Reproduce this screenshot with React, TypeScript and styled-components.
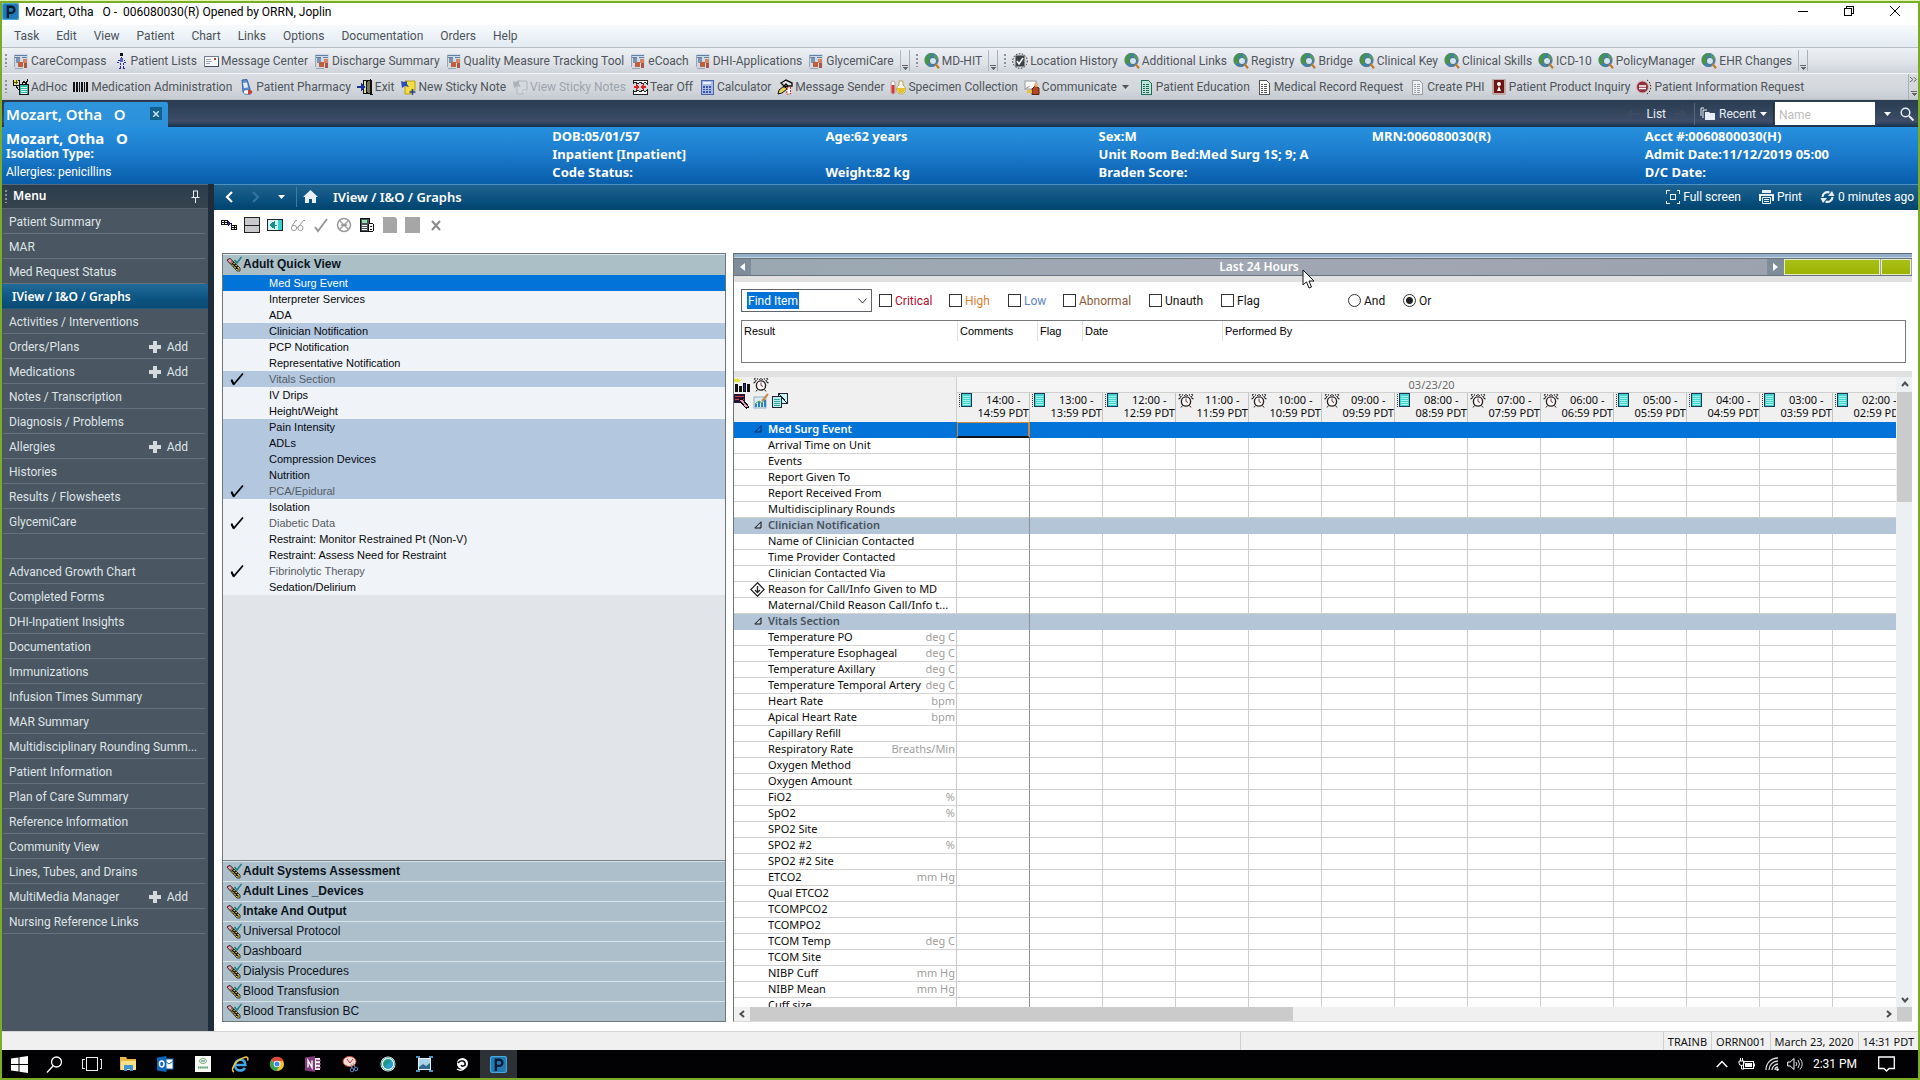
import React from 'react';
import styled, { createGlobalStyle, css } from 'styled-components';

const UI = 'Roboto, "Segoe UI", sans-serif';
const HUMANIST = '"Noto Sans", "Segoe UI", sans-serif';
const CLASSIC = '"Liberation Sans", Arial, sans-serif';

const Global = createGlobalStyle`
  *, *::before, *::after { box-sizing: border-box; }
  body { margin: 0; background: #000; font: 12px/16px ${UI}; color: #111; overflow: hidden; }
  button, input { font: inherit; color: inherit; }
  button { border: 0; padding: 0; background: none; cursor: default; }
  svg { display: block; flex: none; }
  ul { list-style: none; margin: 0; padding: 0; }
  a { color: inherit; text-decoration: none; cursor: default; }
`;

/* ---------- window frame ---------- */

const Screen = styled.div`
  height: 100vh;
  padding-top: 1px;
  background: #e2f7b4;
  display: flex;
`;
const Frame = styled.div`
  flex: 1;
  min-width: 0;
  border: 2px solid #7bac25;
  background: #fff;
  display: flex;
  flex-direction: column;
`;
const TitleBar = styled.header`
  height: 22px;
  flex: none;
  display: flex;
  align-items: flex-start;
  background: #fff;
  color: #000;
  white-space: pre;
`;
const TitleText = styled.h1`
  margin: 0;
  flex: 1;
  padding: 1px 0 0 6px;
  font-size: 12px;
  line-height: 16px;
  font-weight: 400;
`;
const WindowButton = styled.button`
  width: 46px;
  height: 16px;
  display: flex;
  justify-content: center;
  align-items: center;
`;
const MenuBar = styled.nav`
  height: 23px;
  flex: none;
  display: flex;
  align-items: center;
  gap: 17px;
  padding-left: 12px;
  background: linear-gradient(#f7fafc, #e2ebf3);
  border-bottom: 1px solid #b9bec5;
  color: #4c5258;
`;

/* ---------- toolbars ---------- */

const ToolStrip = styled.div<{ $low?: boolean }>`
  height: 26px;
  flex: none;
  display: flex;
  align-items: stretch;
  background: ${(p) => (p.$low ? 'linear-gradient(#dadde2, #d3d7dc 60%, #c6cbd2)' : 'linear-gradient(#edf0f5, #dfe2e7 60%, #ced3da)')};
  border-bottom: 1px solid ${(p) => (p.$low ? '#b9bec5' : '#f3f5f8')};
  color: #4f555c;
`;
const ToolGroup = styled.div`
  display: flex;
  align-items: center;
  padding-left: 3px;
`;
const Grip = styled.i`
  width: 2px;
  height: 13px;
  margin-right: 6px;
  flex: none;
  background: repeating-linear-gradient(#8b929c 0 2px, transparent 2px 4px);
`;
const ToolButton = styled.button<{ $off?: boolean }>`
  height: 22px;
  display: flex;
  align-items: center;
  gap: 2px;
  padding-right: 6px;
  white-space: nowrap;
  color: ${(p) => (p.$off ? '#9ea4ab' : 'inherit')};
`;
const GroupEnd = styled.span`
  align-self: stretch;
  width: 10px;
  margin: 2px 3px 2px 0;
  padding-bottom: 1px;
  border-left: 1px solid #b2b8c0;
  border-right: 1px solid #a9afb8;
  display: flex;
  align-items: flex-end;
  justify-content: center;
`;
const Overflow = styled.button`
  margin-left: auto;
  width: 10px;
  border-left: 1px solid #a9afb8;
  display: flex;
  flex-direction: column;
  align-items: center;
  justify-content: space-between;
  padding: 3px 0;
`;

/* ---------- patient tab and banner ---------- */

const TabBar = styled.div`
  height: 27px;
  flex: none;
  display: flex;
  align-items: center;
  padding-left: 2px;
  background: linear-gradient(#2a3c50, #35475f 50%, #3f4c68 80%, #1f3a56 94%, #16324c);
  color: #e8eef5;
`;
const PatientTab = styled.div`
  align-self: flex-end;
  height: 25px;
  width: 164px;
  padding: 0 6px 2px 2px;
  border-radius: 2px 2px 0 0;
  background: linear-gradient(#2f95dd, #2a90da);
  display: flex;
  align-items: center;
  justify-content: space-between;
  font: 600 15px/20px ${HUMANIST};
  color: #fff;
  white-space: pre;
`;
const TabClose = styled.button`
  width: 12px;
  height: 13px;
  background: #14608f;
  display: grid;
  place-items: center;
`;
const TabTools = styled.div`
  margin-left: auto;
  height: 100%;
  padding-right: 4px;
  display: flex;
  align-items: center;
`;
const ListButtons = styled.div`
  display: flex;
  align-items: center;
  gap: 8px;
  padding-right: 8px;
`;
const RecentButton = styled.button`
  height: 22px;
  display: flex;
  align-items: center;
  gap: 4px;
  width: 80px;
  padding: 0 6px 0 5px;
  border-left: 1px solid #56657c;
  border-right: 1px solid #1c2b3d;
`;
const NameBox = styled.input`
  width: 100px;
  height: 23px;
  margin-left: 1px;
  padding: 2px 4px 0;
  border: 0;
  background: #fff;
  outline: 0;
  &::placeholder { color: #bdbdbd; opacity: 1; }
`;
const IconButton = styled.button<{ $w: number }>`
  width: ${(p) => p.$w}px;
  height: 20px;
  display: grid;
  place-items: center;
`;
const Banner = styled.section`
  height: 57px;
  flex: none;
  padding: 0 0 0 4px;
  display: grid;
  grid-template-columns: 2fr repeat(5, 1fr);
  background: linear-gradient(#2791de, #1b7acb 50%, #0b62b0 90%, #0a5fa9);
  color: #fff;
  font: 700 13px/18px ${HUMANIST};
  white-space: nowrap;
`;
const BannerCol = styled.div`
  display: grid;
  grid-template-rows: repeat(3, 18px);
`;
const PatientName = styled.span`
  font-size: 15px;
  line-height: 22px;
  white-space: pre;
`;
const Isolation = styled.span`font-size: 12px;`;
const Allergies = styled.span`
  font-family: ${UI};
  font-weight: 400;
  font-size: 12px;
`;

/* ---------- body ---------- */

const Body = styled.div`
  flex: 1;
  min-height: 0;
  display: flex;
`;
const Side = styled.aside`
  width: 212px;
  flex: none;
  background: #4a5661;
  border-right: 6px solid #1f2d3b;
  color: #dfe4e8;
`;
const SideHead = styled.div`
  height: 25px;
  border-top: 1px solid #56697a;
  border-bottom: 1px solid #55626d;
  padding: 0 8px 1px 3px;
  display: flex;
  align-items: center;
  background: linear-gradient(#2c3e4d, #36434e);
  color: #fff;
  font: 600 12px/16px ${HUMANIST};
`;
const PinButton = styled.button`margin-left: auto;`;
const SideRow = styled.li<{ $on?: boolean }>`
  height: 25px;
  margin: 0 3px 0 1px;
  padding: 2px 17px 0 6px;
  display: flex;
  align-items: center;
  justify-content: space-between;
  border-bottom: 1px solid #66727d;
  white-space: nowrap;
  ${(p) =>
    p.$on &&
    css`
      margin: 0;
      padding-left: 10px;
      border-color: #1d5a80;
      background: linear-gradient(#226a97, #0c5482 60%, #0b4a74);
      color: #fff;
      font: 600 12px/16px ${HUMANIST};
    `}
`;
const AddButton = styled.button`
  display: flex;
  align-items: center;
  gap: 6px;
`;
const Main = styled.main`
  flex: 1;
  min-width: 0;
  display: flex;
  flex-direction: column;
  background: #fff;
`;
const NavBar = styled.div`
  height: 26px;
  flex: none;
  padding: 0 4px 2px 2px;
  display: flex;
  align-items: center;
  border-top: 1px solid #4a92c4;
  background: linear-gradient(#20618f, #0a517f 60%, #00436e);
  color: #fff;
`;
const NavDivider = styled.i`
  width: 1px;
  height: 20px;
  margin: 0 4px;
  background: #3f7ba3;
`;
const NavTitle = styled.h2`
  margin: 0;
  padding-left: 14px;
  flex: 1;
  font: 600 13px/18px ${HUMANIST};
`;
const NavAction = styled.button`
  display: flex;
  align-items: center;
  gap: 3px;
  margin-left: 18px;
`;
const IconBar = styled.div`
  height: 43px;
  flex: none;
  display: flex;
  align-items: center;
  padding: 0 0 14px 3px;
`;
const Work = styled.div`
  flex: 1;
  min-height: 0;
  display: flex;
  gap: 7px;
  padding: 0 6px 9px 8px;
`;

/* ---------- navigator ---------- */

const Navigator = styled.section`
  width: 504px;
  flex: none;
  border: 1px solid #6f7579;
  background: #e1e5e9;
  display: flex;
  flex-direction: column;
  font: 12px/16px ${CLASSIC};
`;
const Band = styled.button<{ $bold?: boolean; $head?: boolean }>`
  width: 100%;
  height: ${(p) => (p.$head ? 21 : 20)}px;
  flex: none;
  padding: 0 0 2px 3px;
  display: flex;
  align-items: center;
  gap: 1px;
  border-top: 1px solid ${(p) => (p.$head ? '#dfe8ec' : '#d6e4ea')};
  background: ${(p) => (p.$head ? '#abbfc7' : '#adbfcb')};
  font-weight: ${(p) => (p.$bold ? 700 : 400)};
  color: #0b1420;
`;
const Sections = styled.ul`
  flex: 1;
  min-height: 0;
  border-bottom: 1px solid #7a8388;
`;
const Section = styled.li<{ $tone: string; $dim?: boolean }>`
  height: 16px;
  display: grid;
  grid-template-columns: 46px 1fr;
  align-items: center;
  font-size: 11px;
  background: ${(p) => (p.$tone === 'on' ? '#0273d9' : p.$tone === 'hi' ? '#b3c7df' : '#f0f3f7')};
  color: ${(p) => (p.$tone === 'on' ? '#fff' : p.$dim ? '#565c63' : '#05080c')};
`;
const Tick = styled.span`padding-left: 7px;`;

/* ---------- flowsheet ---------- */

const Flow = styled.section`
  flex: 1;
  min-width: 0;
  border-left: 1px solid #6f7579;
  border-bottom: 1px solid #dcdcdc;
  background: #e1e1e1;
  display: flex;
  flex-direction: column;
`;
const Stripe = styled.div`
  height: 5px;
  flex: none;
  background: #94b0ca;
  border-top: 1px solid #5f6c77;
  border-bottom: 1px solid #c4d2df;
`;
const Timeline = styled.div`
  height: 18px;
  flex: none;
  display: flex;
  border-top: 1px solid #66727c;
  border-bottom: 1px solid #66727c;
  background: linear-gradient(90deg, #9aa8b1, #a1a6b3 50%, #9ba2ac);
`;
const Range = styled.span`
  flex: 1;
  text-align: center;
  color: #fff;
  font: 600 12px/16px ${HUMANIST};
`;
const Step = styled.button`
  width: 17px;
  background: #7e8d99;
  display: grid;
  place-items: center;
`;
const Block = styled.i<{ $w: number }>`
  width: ${(p) => p.$w}px;
  margin-right: 1px;
  border: 1px solid #e6edc4;
  background: linear-gradient(#a9c01a, #9cb400);
`;
const FilterPane = styled.div`
  flex: none;
  margin: 6px 0;
  padding: 7px 6px 8px 7px;
  background: #fff;
`;
const FilterRow = styled.div`
  height: 23px;
  margin-bottom: 8px;
  display: flex;
  align-items: center;
`;
const Combo = styled.div`
  width: 131px;
  height: 23px;
  margin-right: 7px;
  border: 1px solid #5f6468;
  display: flex;
  align-items: center;
  padding-left: 5px;
`;
const ComboInput = styled.input`
  width: 52px;
  height: 17px;
  padding: 0 0 0 1px;
  border: 0;
  outline: 0;
  background: #0273d9;
  color: #fff;
`;
const ComboArrow = styled.button`
  margin-left: auto;
  padding-right: 4px;
`;
const Choice = styled.label<{ $c: string; $w: number }>`
  display: flex;
  align-items: center;
  gap: 3px;
  width: ${(p) => p.$w}px;
  color: ${(p) => p.$c};
  white-space: nowrap;
`;
const Box = styled.input`
  appearance: none;
  width: 13px;
  height: 13px;
  margin: 0;
  flex: none;
  border: 1px solid #333;
  background: #fff;
  &[type='radio'] { border-radius: 50%; }
  &[type='radio']:checked { background: radial-gradient(circle, #222 0 3px, #fff 4px); }
`;
const ResultTable = styled.table`
  width: 100%;
  height: 43px;
  border: 1px solid #77797b;
  border-collapse: separate;
  border-spacing: 0;
  table-layout: fixed;
  font: 11px/19px ${CLASSIC};
  color: #000;
  th { font-weight: 400; text-align: left; padding: 0 0 0 2px; height: 20px; }
  th + th { border-left: 1px solid #e2e2e2; }
  td { padding: 0; }
`;
const GridArea = styled.div`
  flex: 1;
  min-height: 0;
  display: grid;
  grid-template-columns: minmax(0, 1fr) 15px;
  grid-template-rows: minmax(0, 1fr) 14px;
  column-gap: 1px;
  background: #f0f0f0;
`;
const GridClip = styled.div`
  overflow: hidden;
  background: #fff;
`;
const Sheet = styled.table`
  border-collapse: separate;
  border-spacing: 0;
  table-layout: fixed;
  width: 1172px;
  font: 11px/15px ${HUMANIST};
  color: #0a0a0a;
  th, td { padding: 0; font-weight: 400; }
`;
const Corner = styled.th`
  width: 223px;
  background: #f0f0f0;
  border-right: 1px solid #cfcfcf;
  vertical-align: top;
`;
const CornerIcons = styled.div`
  display: grid;
  grid-template-columns: repeat(3, 16px);
  column-gap: 3px;
`;
const DateHead = styled.th`
  height: 16px;
  background: #f5f5f5;
  border-bottom: 1px solid #cfcfcf;
  color: #6a6a6a;
  line-height: 15px;
`;
const HourHead = styled.th`
  height: 29px;
  background: #f0f0f0;
  border-right: 1px solid #c4c4c4;
  vertical-align: top;
`;
const HourLine = styled.div`
  display: flex;
  justify-content: space-between;
  padding-left: 2px;
  line-height: 13px;
  white-space: nowrap;
  text-align: center;
`;
const LabelCell = styled.th<{ $kind: string }>`
  height: 16px;
  text-align: left;
  border-bottom: 1px solid #d3d3d3;
  border-right: 1px solid #c9c9c9;
  ${(p) => p.$kind === 'on' && css`background: #0273d9; color: #fff; border-color: #0273d9; && { font-weight: 600; }`}
  ${(p) => p.$kind === 'head' && css`background: #b3c5d7; color: #46525e; border-color: #b3c5d7; && { font-weight: 600; }`}
`;
const LabelLine = styled.div`
  display: grid;
  grid-template-columns: 16px 18px 1fr auto;
  grid-template-rows: 14px;
  align-items: center;
  height: 15px;
  line-height: 14px;
  white-space: nowrap;
`;
const Marker = styled.span`
  width: 15px;
  display: grid;
  place-items: center;
`;
const Unit = styled.span`
  color: #a0a0a0;
  padding-right: 1px;
`;
const Cell = styled.td<{ $kind: string; $first?: boolean; $focus?: boolean }>`
  border-bottom: 1px solid #cdcdcd;
  border-right: 1px solid ${(p) => (p.$first ? '#8e8e8e' : '#cdcdcd')};
  ${(p) => p.$kind === 'on' && css`background: #0273d9; border-color: #0273d9;`}
  ${(p) => p.$kind === 'head' && css`background: #b3c5d7; border-color: ${p.$first ? '#8e8e8e' : '#b3c5d7'}; border-bottom-color: #b3c5d7;`}
  ${(p) => p.$focus && css`border: 1px solid #c98a3c; border-right-width: 2px; border-bottom: 2px solid #10131a;`}
`;
const VScroll = styled.div`
  display: flex;
  flex-direction: column;
  align-items: stretch;
  background: #edf0f2;
`;
const HScroll = styled.div`
  display: flex;
  background: #f0f0f0;
`;
const ScrollButton = styled.button`
  min-width: 15px;
  min-height: 14px;
  display: grid;
  place-items: center;
`;
const VThumb = styled.i`
  flex: 0 0 17.5%;
  margin: 1px 0 auto;
  background: #cbcbcb;
`;
const HThumb = styled.i`
  flex: 0 0 46.7%;
  margin: 0 auto 0 1px;
  background: #cbcbcb;
`;
const ScrollCorner = styled.i`background: #cbcbcb;`;

const Pointer = styled.div`
  position: fixed;
  left: 1302px;
  top: 269px;
  pointer-events: none;
`;

/* ---------- status bar and taskbar ---------- */

const StatusBar = styled.footer`
  height: 19px;
  flex: none;
  display: flex;
  justify-content: flex-end;
  border-top: 1px solid #d5d5d5;
  background: #f0f0f0;
  color: #111;
  font: 11px/16px ${HUMANIST};
`;
const StatusCell = styled.span<{ $w?: number }>`
  ${(p) => p.$w && `width: ${p.$w}px;`}
  padding: 2px 4px 0;
  border-left: 1px solid #cfcfcf;
`;
const TaskBar = styled.div`
  height: 28px;
  flex: none;
  display: flex;
  background: #020204;
  color: #fff;
`;
const TaskButton = styled.button<{ $on?: boolean }>`
  width: 37px;
  display: grid;
  place-items: center;
  background: ${(p) => (p.$on ? '#2e3136' : 'transparent')};
  &:first-child { width: 34px; }
`;
const Tray = styled.div`
  margin-left: auto;
  display: flex;
  align-items: center;
`;
const Clock = styled.time`
  width: 58px;
  text-align: center;
  color: #fff;
`;

/* ---------- icons ---------- */

const I = ({ w = 16, h = 16, vb, crisp, children }: { w?: number; h?: number; vb?: string; crisp?: boolean; children: React.ReactNode }) => (
  <svg width={w} height={h} viewBox={vb || `0 0 ${w} ${h}`} fill="none" shapeRendering={crisp ? 'crispEdges' : undefined} aria-hidden="true">
    {children}
  </svg>
);
const Caret = ({ c = '#fff' }: { c?: string }) => (
  <I w={7} h={4}><path d="M0 0h7L3.5 4z" fill={c} /></I>
);
const Logo = ({ s = 17 }: { s?: number }) => (
  <I w={s} h={s} vb="0 0 16 16">
    <rect width="16" height="16" rx="2" fill="#2379b3" />
    <rect x="0.5" y="0.5" width="15" height="15" rx="2" fill="none" stroke="#4aa9dd" />
    <path d="M5.5 14V3.5h3.3a2.9 2.9 0 0 1 0 5.8H6" stroke="#061d33" strokeWidth="2.2" />
  </I>
);
const PageIcon = () => (
  <I crisp>
    <rect x="1" y="1" width="14" height="14" fill="#cfdae6" />
    <path d="M2 2h12M2 4h5M9 4h5" stroke="#5f7fa6" />
    <rect x="3" y="5" width="4" height="5" fill="#7d93b0" />
    <rect x="5" y="9" width="5" height="5" fill="#c05f3e" />
    <rect x="10" y="6" width="4" height="4" fill="#d58566" />
    <rect x="11" y="10" width="3" height="5" fill="#a85744" />
    <path d="M2 15h8M1.500 2v12" stroke="#98a5b5" />
  </I>
);
const PersonIcon = () => (
  <I crisp>
    <rect x="7" y="0" width="3" height="3" fill="#111" />
    <path d="M8.500 4v6M5 7h7M4 9h2M11 9h2M7 10v5M10 10v5M6 15h2M10 15h2" stroke="#2b2f9d" strokeDasharray="2 1" />
    <rect x="7" y="5" width="3" height="4" fill="#5c62c8" />
  </I>
);
const MailIcon = () => (
  <I crisp>
    <rect x="1" y="3" width="14" height="10" fill="#f6f8fa" stroke="#70808f" />
    <path d="M3 6h5M3 8h6M3 10h4" stroke="#9aa7b4" />
    <rect x="11" y="5" width="2" height="2" fill="#c0392b" />
    <path d="M2 13.500h13v-9" stroke="#3d4a57" />
  </I>
);
const GlobeIcon = () => (
  <I>
    <circle cx="7.500" cy="7" r="6.700" fill="#3583bd" stroke="#4d6d80" strokeWidth=".8" />
    <path d="M2 3.500c2-2.500 5-3 7-2.500-1 2-4 2-4 4s2 2 1 4-2 1-3 3C.500 9.500.500 6 2 3.500z" fill="#46963c" />
    <path d="M10 1.500c2.500 1 4 3 3.800 6-1.800-.5-2.800-2-3.800-2.500z" fill="#56a449" />
    <circle cx="9" cy="8" r="3.600" fill="#dff0f8" fillOpacity=".9" stroke="#5b6b76" />
    <path d="M11.500 11l3.500 4.200" stroke="#c07c28" strokeWidth="2.200" />
  </I>
);
const LocationIcon = () => (
  <I>
    <circle cx="8" cy="8" r="7.300" fill="#d5d9dc" stroke="#333" strokeDasharray="1.500 1.500" />
    <rect x="3.500" y="2.500" width="9" height="11" rx="1" fill="#3c4347" />
    <path d="M5 8l2 3 4-6" stroke="#fff" strokeWidth="1.500" />
  </I>
);
const AdHocIcon = () => (
  <I crisp>
    <path d="M0 1h6v5H0zM2 6l4 5M1 3l4-2" stroke="#111" />
    <rect x="1" y="1" width="4" height="4" fill="#e2df43" />
    <path d="M3 1v4M1 3h4" stroke="#55520a" />
    <path d="M9 5l2-3 2 3 2-5" stroke="#111" />
    <rect x="6.500" y="5.500" width="9" height="10" fill="#32b9a8" stroke="#111" />
    <path d="M8 8h6M8 10h6M8 12h6M8 14h6" stroke="#dff8f3" />
  </I>
);
const BarcodeIcon = () => (
  <I crisp>
    <path d="M1 3v10M4 3v10M9 3v10M14 3v10" stroke="#111" strokeWidth="2" />
    <path d="M6.500 3v10M11.500 3v10" stroke="#111" />
  </I>
);
const BottleIcon = () => (
  <I>
    <path d="M4 1l5-.5L12 10l-2 4-5-1z" fill="#5d8fd0" stroke="#3a62a5" />
    <path d="M5 4l4-.5 1 5-4 .5z" fill="#e4edf8" />
    <ellipse cx="9.500" cy="13" rx="4.300" ry="2.300" fill="#fff" stroke="#4473b8" />
    <path d="M10 10.800c3 0 4.500 1 4 2.700s-2 1.800-4 1.800z" fill="#c9432f" />
  </I>
);
const ExitIcon = () => (
  <I crisp>
    <rect x="6" y="1" width="8" height="13" fill="#d5d7ad" stroke="#111" />
    <path d="M9 3l4-2v14l-4-2z" fill="#77795a" stroke="#111" />
    <path d="M0 8h5" stroke="#1b2fa0" strokeWidth="2" />
    <path d="M4 4l4 4-4 4z" fill="#1b2fa0" />
    <path d="M13 15h3" stroke="#111" />
  </I>
);
const NoteIcon = ({ off }: { off?: boolean }) => (
  <I>
    <path d="M5 2h10v9l-4 4H5z" fill={off ? '#d3d8de' : '#f4dd3f'} stroke={off ? '#aeb5bd' : '#b89d1f'} />
    <path d="M11 15v-4h4" fill={off ? '#eceff2' : '#fff6a8'} stroke={off ? '#aeb5bd' : '#b89d1f'} />
    <path d="M1 2l3 1 3-1v3l2 3-4-1-3 2z" fill={off ? '#a9b1bb' : '#2850b8'} />
    {!off && <path d="M12.500 10v6M9.500 13h6" stroke="#2b3c8f" strokeWidth="1.400" />}
  </I>
);
const TearIcon = () => (
  <I crisp>
    <path d="M1 5V1h14v4l-2-2-2 2-3-2-2 2-3-2zM1 11v4h14v-4l-2 2-2-2-3 2-2-2-3 2z" fill="#fff" stroke="#222" />
    <path d="M2 8h3M11 8h3" stroke="#d22" strokeWidth="2" />
    <path d="M4 5l4 3-4 3zM12 5L8 8l4 3z" fill="#d22" />
  </I>
);
const CalcIcon = () => (
  <I crisp>
    <rect x="2" y="1" width="12" height="14" fill="#a9bbe4" stroke="#4b62a8" />
    <rect x="4" y="3" width="8" height="2" fill="#e9f0ff" />
    <path d="M5 7v7M8 7v7M11 7v7" stroke="#3b55a8" strokeWidth="2" strokeDasharray="1.500 1" />
  </I>
);
const SenderIcon = () => (
  <I>
    <path d="M1 15l1-4 5-4 3 3-5 4z" fill="#e5d44a" stroke="#111" />
    <path d="M4 4l5-3 6 3v3h-4L9 5 7 7z" fill="#e8e8e8" stroke="#111" strokeWidth="1.400" />
    <path d="M10.500 8h3v7h-4z" fill="#fff" stroke="#c33" strokeDasharray="2 1" />
    <path d="M6 7.500h5" stroke="#111" strokeWidth="2" />
  </I>
);
const FlaskIcon = () => (
  <I>
    <rect x="1" y="2" width="4" height="13" rx="2" fill="#fff" stroke="#b99" />
    <path d="M1.500 6h3v7a1.500 1.500 0 0 1-3 0z" fill="#d23737" />
    <path d="M9 2h4v4c4 3 3 9-2 9s-6-6-2-9z" fill="#fbf9e5" stroke="#b7a565" />
    <path d="M7 9h8c0 3-2 5.500-4 5.500S7 12 7 9z" fill="#e4c02a" />
  </I>
);
const CommIcon = () => (
  <I>
    <rect x="1" y="2" width="11" height="8" fill="#fff" stroke="#999" />
    <path d="M1 10l5-3" stroke="#999" />
    <path d="M8 15.500V10l3-3 4 2v6.500z" fill="#b3471f" stroke="#5c2510" />
    <circle cx="12" cy="6" r="2" fill="#e9b07e" />
    <rect x="3" y="11" width="5" height="3" fill="#e7c23b" />
  </I>
);
const DocIcon = ({ c = '#1f6d58', bg = '#bfe3d6' }: { c?: string; bg?: string }) => (
  <I crisp>
    <path d="M3 1h7l3 3v11H3z" fill={bg} stroke={c} />
    <path d="M5 5h2M5 7h2M5 9h2M5 11h2M5 13h2M8 5h3M8 7h3M8 9h3M8 11h3M8 13h3" stroke={c} />
  </I>
);
const ProductIcon = () => (
  <I>
    <rect x="1" y="0" width="14" height="16" rx="1" fill="#bfa9a7" />
    <rect x="3" y="1" width="10" height="13" fill="#6e1414" />
    <circle cx="8" cy="5" r="2" fill="#fff" />
    <path d="M6 12l2-5 2 5z" fill="#fff" />
  </I>
);
const RequestIcon = () => (
  <I>
    <circle cx="6.500" cy="8" r="6" fill="#8e3040" stroke="#dcb2b2" />
    <path d="M3 7h7M3 9.500h7" stroke="#fff" strokeWidth="1.300" />
    <path d="M11 1c5 3 5 11 0 14" stroke="#222" strokeDasharray="1.500 1.500" />
  </I>
);
const DropMini = () => (
  <I w={6} h={6} crisp><path d="M0 1h6" stroke="#666" /><path d="M0 3h6L3 6z" fill="#666" /></I>
);
const PencilTick = () => (
  <I>
    <path d="M1 4l3-1.500L14 12v3h-3z" fill="#e7d05a" stroke="#222" strokeWidth=".9" />
    <path d="M1 4l3-1.500L6.500 5 4 7.500z" fill="#e6a3b4" stroke="#3a1720" strokeWidth=".8" />
    <path d="M5.500 8.500L8 6M7.500 10.500L10 8M9.500 12.500L12 10M6.500 7.500l6 6" stroke="#161616" strokeWidth="1.200" />
    <path d="M8.500 4l2.500 3L15.500 1" stroke="#1d8087" strokeWidth="1.500" />
  </I>
);
const BoldTick = () => (
  <I w={14} h={14}><path d="M1.500 8.500L4 12 13 1.500" stroke="#05070a" strokeWidth="1.800" /><path d="M1.500 7.500l2 5" stroke="#05070a" strokeWidth="2" /></I>
);
const AlarmIcon = () => (
  <I w={16} h={15}>
    <path d="M2 4.500L5 1.500M14 4.500l-3-3M1 2.500L3 .5M15 2.500l-2-2M.5 6l2-1M15.500 6l-2-1" stroke="#222" strokeWidth="1.200" strokeDasharray="2 1" />
    <circle cx="8" cy="8.500" r="4.600" fill="#fff" stroke="#2b2222" strokeWidth="1.400" />
    <path d="M8 5.500v3l2 1" stroke="#7b2b2b" />
    <path d="M4.500 12.500L3 14.500M11.500 12.500l1.500 2M6 3l2-1.500L10 3" stroke="#2b2222" />
  </I>
);
const BookIcon = () => (
  <I w={13} h={15} crisp>
    <rect x="2.500" y="0.500" width="10" height="13" fill="#45d3cc" stroke="#153a5c" />
    <path d="M4 3.500h7M4 5.500h7M4 7.500h7M4 9.500h7M4 11.500h7" stroke="#a4f4ee" />
    <path d="M.500 1v13" stroke="#333" strokeDasharray="1 1" />
  </I>
);
const Tri = ({ c }: { c: string }) => (
  <I w={8} h={8}><path d="M7 .8V7H.8z" fill="none" stroke={c} /></I>
);
const Diamond = () => (
  <I w={15} h={15}>
    <path d="M7.500.8l6.700 6.700-6.700 6.700L.8 7.500z" fill="#fff" stroke="#222" strokeWidth="1.300" />
    <path d="M7.500 4v6.500M5 8l2.500 2.600L10 8" stroke="#222" strokeWidth="1.300" />
  </I>
);
const Chevron = ({ d }: { d: string }) => (
  <I w={8} h={8}><path d={d} stroke="#4c4c4c" strokeWidth="2" /></I>
);

/* ---------- data ---------- */

const menus = ['Task', 'Edit', 'View', 'Patient', 'Chart', 'Links', 'Options', 'Documentation', 'Orders', 'Help'];

const linkGroups: [React.ReactNode, string][][] = [
  [
    [<PageIcon />, 'CareCompass'],
    [<PersonIcon />, 'Patient Lists'],
    [<MailIcon />, 'Message Center'],
    [<PageIcon />, 'Discharge Summary'],
    [<PageIcon />, 'Quality Measure Tracking Tool'],
    [<PageIcon />, 'eCoach'],
    [<PageIcon />, 'DHI-Applications'],
    [<PageIcon />, 'GlycemiCare'],
  ],
  [[<GlobeIcon />, 'MD-HIT']],
  [
    [<LocationIcon />, 'Location History'],
    ...['Additional Links', 'Registry', 'Bridge', 'Clinical Key', 'Clinical Skills', 'ICD-10', 'PolicyManager', 'EHR Changes'].map(
      (t): [React.ReactNode, string] => [<GlobeIcon />, t],
    ),
  ],
];

const actions: [React.ReactNode, string][] = [
  [<AdHocIcon />, 'AdHoc'],
  [<BarcodeIcon />, 'Medication Administration'],
  [<BottleIcon />, 'Patient Pharmacy'],
  [<ExitIcon />, 'Exit'],
  [<NoteIcon />, 'New Sticky Note'],
  [<NoteIcon off />, 'View Sticky Notes'],
  [<TearIcon />, 'Tear Off'],
  [<CalcIcon />, 'Calculator'],
  [<SenderIcon />, 'Message Sender'],
  [<FlaskIcon />, 'Specimen Collection'],
  [<CommIcon />, 'Communicate'],
  [<DocIcon />, 'Patient Education'],
  [<DocIcon c="#555" bg="#fff" />, 'Medical Record Request'],
  [<DocIcon c="#9aa0a6" bg="#eef0f2" />, 'Create PHI'],
  [<ProductIcon />, 'Patient Product Inquiry'],
  [<RequestIcon />, 'Patient Information Request'],
];

const bannerCols = [
  ['DOB:05/01/57', 'Inpatient [Inpatient]', 'Code Status:'],
  ['Age:62 years', '', 'Weight:82 kg'],
  ['Sex:M', 'Unit Room Bed:Med Surg 1S; 9; A', 'Braden Score:'],
  ['MRN:006080030(R)', '', ''],
  ['Acct #:0060800030(H)', 'Admit Date:11/12/2019 05:00', 'D/C Date:'],
];

const sideItems = [
  'Patient Summary', 'MAR', 'Med Request Status', 'IView / I&O / Graphs', 'Activities / Interventions', 'Orders/Plans+', 'Medications+',
  'Notes / Transcription', 'Diagnosis / Problems', 'Allergies+', 'Histories', 'Results / Flowsheets', 'GlycemiCare', '', 'Advanced Growth Chart',
  'Completed Forms', 'DHI-Inpatient Insights', 'Documentation', 'Immunizations', 'Infusion Times Summary', 'MAR Summary',
  'Multidisciplinary Rounding Summ...', 'Patient Information', 'Plan of Care Summary', 'Reference Information', 'Community View',
  'Lines, Tubes, and Drains', 'MultiMedia Manager+', 'Nursing Reference Links',
];

const sections: [string, string, boolean?][] = [
  ['Med Surg Event', 'on'], ['Interpreter Services', ''], ['ADA', ''], ['Clinician Notification', 'hi'], ['PCP Notification', ''],
  ['Representative Notification', ''], ['Vitals Section', 'hi', true], ['IV Drips', ''], ['Height/Weight', ''], ['Pain Intensity', 'hi'],
  ['ADLs', 'hi'], ['Compression Devices', 'hi'], ['Nutrition', 'hi'], ['PCA/Epidural', 'hi', true], ['Isolation', ''],
  ['Diabetic Data', '', true], ['Restraint: Monitor Restrained Pt (Non-V)', ''], ['Restraint: Assess Need for Restraint', ''],
  ['Fibrinolytic Therapy', '', true], ['Sedation/Delirium', ''],
];

const bands: [string, boolean][] = [
  ['Adult Systems Assessment', true], ['Adult Lines _Devices', true], ['Intake And Output', true], ['Universal Protocol', false],
  ['Dashboard', false], ['Dialysis Procedures', false], ['Blood Transfusion', false], ['Blood Transfusion BC', false],
];

const filters: [string, string, number][] = [
  ['Critical', '#b01030', 70], ['High', '#d98032', 59], ['Low', '#6286cc', 55], ['Abnormal', '#8c5a3c', 86], ['Unauth', '#111', 72], ['Flag', '#111', 127],
];

const hours = ['14', '13', '12', '11', '10', '09', '08', '07', '06', '05', '04', '03', '02'];
const alarmHours = ['11', '10', '09', '07', '06'];

const rows: [string, string?, string?][] = [
  ['Med Surg Event', 'on'], ['Arrival Time on Unit'], ['Events'], ['Report Given To'], ['Report Received From'], ['Multidisciplinary Rounds'],
  ['Clinician Notification', 'head'], ['Name of Clinician Contacted'], ['Time Provider Contacted'], ['Clinician Contacted Via'],
  ['Reason for Call/Info Given to MD', 'mark'], ['Maternal/Child Reason Call/Info t...'], ['Vitals Section', 'head'],
  ['Temperature PO', '', 'deg C'], ['Temperature Esophageal', '', 'deg C'], ['Temperature Axillary', '', 'deg C'],
  ['Temperature Temporal Artery', '', 'deg C'], ['Heart Rate', '', 'bpm'], ['Apical Heart Rate', '', 'bpm'], ['Capillary Refill'],
  ['Respiratory Rate', '', 'Breaths/Min'], ['Oxygen Method'], ['Oxygen Amount'], ['FiO2', '', '%'], ['SpO2', '', '%'], ['SPO2 Site'],
  ['SPO2 #2', '', '%'], ['SPO2 #2 Site'], ['ETCO2', '', 'mm Hg'], ['Qual ETCO2'], ['TCOMPCO2'], ['TCOMPO2'], ['TCOM Temp', '', 'deg C'],
  ['TCOM Site'], ['NIBP Cuff', '', 'mm Hg'], ['NIBP Mean', '', 'mm Hg'], ['Cuff size'],
];

const viewIcons: [string, React.ReactNode][] = [
  ['Customize', <I crisp><rect x=".5" y="3.500" width="6" height="4" stroke="#111" /><path d="M.5 5.500h6M3.500 3.500v4M7 6h3v4h1" stroke="#111" /><rect x="10.500" y="8.500" width="5" height="4" stroke="#111" /><path d="M10 10.500h6M13 8v5" stroke="#111" /><path d="M7 4v5l3-2z" fill="#23238e" /></I>],
  ['Split', <I crisp><rect x=".5" y=".5" width="15" height="15" fill="#c9c9cd" stroke="#222" /><path d="M1 8.500h14" stroke="#222" /></I>],
  ['Dock', <I crisp><rect x=".5" y="2.500" width="15" height="11" fill="#d8f3f1" stroke="#222" /><rect x="11" y="3" width="4" height="10" fill="#34d0cb" /><path d="M3 8l4-3v6zM7 8h3" fill="#168f8c" stroke="#168f8c" /></I>],
  ['Review', <I><circle cx="4" cy="11" r="2.600" stroke="#999" /><circle cx="10.500" cy="11" r="2.600" stroke="#999" /><path d="M2 9l4-6 1 1M9 9l5-6 1 1M6.500 10.500h1.500" stroke="#999" /></I>],
  ['Sign', <I><path d="M2 10l3 4 9-12" stroke="#999" strokeWidth="2" /></I>],
  ['Cancel', <I><circle cx="8" cy="8" r="6.500" stroke="#999" strokeWidth="1.500" /><path d="M3.500 3.500l9 9M12.500 3.500l-9 9M5 8h6" stroke="#999" strokeWidth="1.300" /></I>],
  ['Device', <I crisp><rect x="1" y="1" width="9" height="13" fill="#4b5357" stroke="#111" /><rect x="3" y="3" width="5" height="3" fill="#8fe0a8" /><path d="M3 8h5M3 10h5M3 12h5" stroke="#fff" /><rect x="9.500" y="6.500" width="5" height="8" rx="2" fill="#fff" stroke="#111" /><path d="M11 9h2M11 12h2" stroke="#111" /></I>],
  ['Document', <I><path d="M1 0h12l2 2v14H1z" fill="#a6a6a6" /></I>],
  ['Copy', <I><rect x="0" y="0" width="15" height="16" fill="#a6a6a6" /></I>],
  ['Remove', <I><path d="M4 4l8 9M12 4l-8 9" stroke="#8a8a8a" strokeWidth="2" /></I>],
];

const taskIcons: [string, React.ReactNode][] = [
  ['Start', <I w={17} h={17}><path d="M0 2.500L7.500 1.500V8H0zM8.500 1.300L17 0v8H8.500zM0 9h7.500v6.500L0 14.500zM8.500 9H17v8l-8.500-1.300z" fill="#fff" /></I>],
  ['Search', <I w={17} h={17}><circle cx="10.500" cy="6" r="5" stroke="#fff" strokeWidth="1.300" /><path d="M7 10l-6 6.500" stroke="#fff" strokeWidth="1.300" /></I>],
  ['Task View', <I w={20} h={16} crisp><rect x="4.500" y="1.500" width="11" height="13" stroke="#eee" /><path d="M2.500 3.500h-2v9h2M17.500 3.500h2v9h-2" stroke="#ddd" /></I>],
  ['Explorer', <I w={17} h={16}><path d="M0 1h6l1 2h9v11H0z" fill="#e9b945" /><rect x="1" y="5" width="15" height="9" fill="#fbe08c" /><path d="M4 15V9h9v6h-3v-2H7v2z" fill="#3c93d6" /></I>],
  ['Outlook', <I w={17} h={16}><rect x="7" y="3" width="9" height="10" fill="#fff" stroke="#1b6ab8" /><path d="M8 5l4 3 4-3" stroke="#1b6ab8" /><path d="M0 1.500L9.500 0v16L0 14.500z" fill="#0d67bd" /><ellipse cx="4.700" cy="8" rx="2.300" ry="2.900" stroke="#fff" strokeWidth="1.500" /></I>],
  ['Cerner', <I w={16} h={16}><rect width="16" height="16" fill="#f7f9f7" /><ellipse cx="8" cy="5" rx="3.500" ry="2.500" stroke="#7dac63" /><path d="M6 5h4" stroke="#3b6ea5" /><path d="M3 11.500h10" stroke="#4a9a62" strokeWidth="2" strokeDasharray="1.500 .6" /></I>],
  ['Internet Explorer', <I w={18} h={17}><path d="M4.500 9h9.800c0-3.300-2-5.200-5-5.200S4 6.300 4 9.300s2 5.200 5.200 5.200c2.200 0 3.800-1 4.700-2.700" stroke="#41a6e8" strokeWidth="2.500" /><path d="M3 16C-1.500 14 5 3.500 14 1.200c2.500-.5 3.500.8 2.500 3.300" stroke="#f0c443" strokeWidth="1.500" /></I>],
  ['Chrome', <I w={16} h={16}><circle cx="8" cy="8" r="7" fill="#f4c430" /><path d="M8 8L2 4.300A7 7 0 0 1 14.500 5H8z" fill="#db4a3a" /><path d="M8 8L1.800 4.500A7 7 0 0 0 7.500 15L11 9.500z" fill="#35a352" /><circle cx="8" cy="8" r="3.300" fill="#fff" /><circle cx="8" cy="8" r="2.500" fill="#4285f4" /></I>],
  ['OneNote', <I w={17} h={16}><rect x="8" y="2" width="7" height="12" fill="#fff" /><path d="M11 4.500h5M11 8h5M11 11.500h5" stroke="#80397b" strokeWidth="1.500" /><path d="M0 1.500L10 0v16L0 14.500z" fill="#80397b" /><path d="M3 11.500v-7l4 7v-7" stroke="#fff" strokeWidth="1.400" /></I>],
  ['Snipping Tool', <I w={17} h={17}><ellipse cx="7.500" cy="5.500" rx="6.500" ry="5" fill="#f3dcd6" stroke="#c5503c" /><path d="M5 3l3 4 3-4" stroke="#b33" /><circle cx="10" cy="14" r="1.800" stroke="#4b88c9" /><circle cx="14" cy="13" r="1.800" stroke="#4b88c9" /><path d="M10 12L9 8M13 11l-2-4" stroke="#999" /></I>],
  ['Connect', <I w={16} h={16}><circle cx="8" cy="8" r="7.500" fill="#fff" /><circle cx="8" cy="8" r="5" fill="#1c9a84" /><path d="M8 3c3 2 3 4 0 5s-2 4 0 5c3-1 5-3 5-5s-2-5-5-5z" fill="#2b9fd6" /><circle cx="8" cy="8" r="6.500" stroke="#49a598" /></I>],
  ['Photos', <I w={17} h={16}><rect x="2.500" y="2.500" width="12" height="11" fill="#a8d2ea" stroke="#e8f1f7" /><path d="M3 11l4-3 3 2 4-3v6H3z" fill="#316a91" /><path d="M0 0h4v2H0zM13 0h4v2h-4zM0 14h4v2H0zM13 14h4v2h-4z" fill="#4c93c2" /></I>],
  ['Recorder', <I w={14} h={14}><circle cx="7.500" cy="6.500" r="5.500" fill="#fff" /><path d="M3 6c2-3 6-3 7 0s-3 4-4 2" stroke="#111" strokeWidth="1.600" /><path d="M2 12c3 2 6 1 8-1" stroke="#fff" strokeWidth="1.500" /></I>],
  ['PowerChart', <Logo />],
];

export default function App() {
  return (
    <Screen>
      <Global />
      <Frame>
        <TitleBar>
          <Logo />
          <TitleText>{'Mozart, Otha   O -  006080030(R) Opened by ORRN, Joplin'}</TitleText>
          <WindowButton aria-label="Minimize"><I w={10} h={10} crisp><path d="M0 5.500h10" stroke="#000" /></I></WindowButton>
          <WindowButton aria-label="Restore"><I w={10} h={10} crisp><path d="M.5 2.500h7v7h-7zM2.500 2V.5h7v7H8" stroke="#000" /></I></WindowButton>
          <WindowButton aria-label="Close"><I w={10} h={10}><path d="M0 0l10 10M10 0L0 10" stroke="#000" /></I></WindowButton>
        </TitleBar>
        <MenuBar>
          {menus.map((m) => <button key={m}>{m}</button>)}
        </MenuBar>

        <ToolStrip>
          {linkGroups.map((g, i) => (
            <ToolGroup key={i}>
              <Grip />
              {g.map(([icon, text]) => <ToolButton key={text}>{icon}{text}</ToolButton>)}
              <GroupEnd><DropMini /></GroupEnd>
            </ToolGroup>
          ))}
        </ToolStrip>
        <ToolStrip $low>
          <ToolGroup>
            <Grip />
            {actions.map(([icon, text]) => (
              <ToolButton key={text} $off={text === 'View Sticky Notes'}>
                {icon}{text}
                {text === 'Communicate' && <IconButton as="span" $w={13}><Caret c="#555" /></IconButton>}
              </ToolButton>
            ))}
          </ToolGroup>
          <Overflow aria-label="More tools">
            <I w={7} h={5}><path d="M0 0l3 2.500L0 5M3.500 0l3 2.500-3 2.500" stroke="#666" /></I>
            <DropMini />
          </Overflow>
        </ToolStrip>

        <TabBar>
          <PatientTab>
            {'Mozart, Otha   O'}
            <TabClose aria-label="Close chart"><I w={6} h={6}><path d="M0 0l6 6M6 0L0 6" stroke="#cfe8fa" strokeWidth="1.400" /></I></TabClose>
          </PatientTab>
          <TabTools>
            <ListButtons>
              <I w={12} h={8}><path d="M5 0L1 4l4 4M1 4h11" stroke="#3d4b62" strokeWidth="2" /></I>
              <button>List</button>
              <I w={12} h={8}><path d="M7 0l4 4-4 4M0 4h11" stroke="#3d4b62" strokeWidth="2" /></I>
            </ListButtons>
            <RecentButton>
              <I w={15} h={14}><path d="M1 9V1h3M3 11V3h4" stroke="#e8eef5" /><path d="M5 5h4l1 1h5v7H5z" fill="#e8eef5" /></I>
              Recent
              <IconButton as="span" $w={14}><Caret /></IconButton>
            </RecentButton>
            <NameBox placeholder="Name" aria-label="Patient name" />
            <IconButton $w={24} aria-label="Search options"><Caret /></IconButton>
            <IconButton $w={15} aria-label="Search"><I w={14} h={14}><circle cx="5.500" cy="5.500" r="4.300" stroke="#e8eef5" strokeWidth="1.500" /><path d="M9 9l4.500 4.500" stroke="#e8eef5" strokeWidth="2" /></I></IconButton>
          </TabTools>
        </TabBar>

        <Banner>
          <BannerCol>
            <PatientName>{'Mozart, Otha   O'}</PatientName>
            <Isolation>Isolation Type:</Isolation>
            <Allergies>Allergies: penicillins</Allergies>
          </BannerCol>
          {bannerCols.map((c) => (
            <BannerCol key={c[0]}>{c.map((t, i) => <span key={i}>{t}</span>)}</BannerCol>
          ))}
        </Banner>

        <Body>
          <Side>
            <SideHead>
              <Grip />
              Menu
              <PinButton aria-label="Pin menu"><I w={9} h={13}><path d="M2.500 1v6M6.500 1v6M2 1h5M.500 7.500h8M4.500 8v5" stroke="#e8edf2" /></I></PinButton>
            </SideHead>
            <ul>
              {sideItems.map((t, i) => (
                <SideRow key={i} $on={i === 3}>
                  {t && <a href="#chart">{t.replace('+', '')}</a>}
                  {t.endsWith('+') && (
                    <AddButton><I w={12} h={12} crisp><path d="M4 0h4v4h4v4H8v4H4V8H0V4h4z" fill="#d5dade" /></I>Add</AddButton>
                  )}
                </SideRow>
              ))}
            </ul>
          </Side>

          <Main>
            <NavBar>
              <IconButton $w={26} aria-label="Back"><I w={8} h={12}><path d="M7 1L2 6l5 5" stroke="#fff" strokeWidth="2.200" /></I></IconButton>
              <IconButton $w={28} aria-label="Forward"><I w={8} h={12}><path d="M1 1l5 5-5 5" stroke="#33759f" strokeWidth="2.200" /></I></IconButton>
              <IconButton $w={22} aria-label="History"><Caret /></IconButton>
              <NavDivider />
              <IconButton $w={18} aria-label="Home"><I w={15} h={13}><path d="M7.500 0L15 7h-2v6H9V9H6v4H2V7H0z" fill="#e8f0f6" /></I></IconButton>
              <NavTitle>IView / I&amp;O / Graphs</NavTitle>
              <NavAction><I w={14} h={14} crisp><path d="M.5 3.500v-3h3M10.500.5h3v3M13.500 10.500v3h-3M3.500 13.500h-3v-3M4.500 4.500h5v5h-5z" stroke="#e8f0f6" /></I>Full screen</NavAction>
              <NavAction><I w={15} h={14}><path d="M3 0h9v3H3z" fill="#e8f0f6" /><path d="M0 4h15v7h-2V6H2v5H0z" fill="#e8f0f6" /><path d="M3.500 7.500h8v6h-8zM5 9.500h5M5 11.500h5" stroke="#e8f0f6" /></I>Print</NavAction>
              <NavAction><I w={15} h={14}><path d="M2.500 7a5 5 0 0 1 7-4.500M12.500 7a5 5 0 0 1-7 4.500" stroke="#e8f0f6" strokeWidth="2.200" /><path d="M8 6h6.500L12 1zM7 8H.5L3 13z" fill="#e8f0f6" /></I>0 minutes ago</NavAction>
            </NavBar>
            <IconBar>
              {viewIcons.map(([name, icon]) => <IconButton key={name} $w={23} aria-label={name}>{icon}</IconButton>)}
            </IconBar>

            <Work>
              <Navigator>
                <Band $head $bold><PencilTick />Adult Quick View</Band>
                <Sections>
                  {sections.map(([t, tone, done]) => (
                    <Section key={t} $tone={tone} $dim={done}>
                      <Tick>{done && <BoldTick />}</Tick>
                      {t}
                    </Section>
                  ))}
                </Sections>
                {bands.map(([t, b]) => <Band key={t} $bold={b}><PencilTick />{t}</Band>)}
              </Navigator>

              <Flow>
                <Stripe />
                <Timeline>
                  <Step aria-label="Earlier"><I w={5} h={8}><path d="M5 0v8L0 4z" fill="#fff" /></I></Step>
                  <Range>Last 24 Hours</Range>
                  <Step aria-label="Later"><I w={5} h={8}><path d="M0 0v8l5-4z" fill="#fff" /></I></Step>
                  <Block $w={96} />
                  <Block $w={30} />
                </Timeline>

                <FilterPane>
                  <FilterRow>
                    <Combo>
                      <ComboInput defaultValue="Find Item" aria-label="Find item" />
                      <ComboArrow aria-label="Show items"><I w={9} h={6}><path d="M.5.500l4 4.500 4-4.500" stroke="#333" /></I></ComboArrow>
                    </Combo>
                    {filters.map(([t, c, w]) => (
                      <Choice key={t} $c={c} $w={w}><Box type="checkbox" />{t}</Choice>
                    ))}
                    <Choice $c="#111" $w={55}><Box type="radio" name="join" />And</Choice>
                    <Choice $c="#111" $w={55}><Box type="radio" name="join" defaultChecked />Or</Choice>
                  </FilterRow>
                  <ResultTable>
                    <colgroup><col width="215" /><col width="80" /><col width="45" /><col width="140" /><col /></colgroup>
                    <thead><tr><th>Result</th><th>Comments</th><th>Flag</th><th>Date</th><th>Performed By</th></tr></thead>
                    <tbody><tr><td colSpan={5} /></tr></tbody>
                  </ResultTable>
                </FilterPane>

                <GridArea>
                  <GridClip>
                    <Sheet>
                      <colgroup><col width="223" />{hours.map((h) => <col key={h} width="73" />)}</colgroup>
                      <thead>
                        <tr>
                          <Corner rowSpan={2}>
                            <CornerIcons>
                              <I crisp><path d="M0 1l2 2 2-3 1 3 3-1-2 3H0z" fill="#e6e23c" /><path d="M2 7v8M6 9v6M10 6v9M14 7v8" stroke="#111" strokeWidth="3" /><path d="M10 7v7" stroke="#22308e" /></I>
                              <AlarmIcon />
                              <span />
                              <I crisp><rect x="0" y="1" width="11" height="9" fill="#24143a" /><path d="M1 3h9M1 6h9" stroke="#d3423c" strokeWidth="1" /><path d="M6 6l8 9" stroke="#111" strokeWidth="4" /><path d="M7 7l6 7" stroke="#e59ac0" strokeWidth="2" /></I>
                              <I><rect x="1" y="4" width="12" height="11" fill="#dcecf3" stroke="#8fb0c0" /><path d="M3 14v-3M6 14V9M9 14v-4M12 14V7" stroke="#2b7fc2" strokeWidth="2" /><path d="M2 11l4-3 3 2 3-4" stroke="#3fa04a" /><path d="M9 8l6-7" stroke="#c98a4a" strokeWidth="2" /></I>
                              <I crisp><rect x="6.500" y=".5" width="9" height="10" fill="#c9f5f2" stroke="#223" /><path d="M7 1l8 9" stroke="#223" /><rect x=".5" y="3.500" width="9" height="11" fill="#b5f3ef" stroke="#223" /><path d="M2 6h6M2 8h6M2 10h6M2 12h6" stroke="#35a09a" /></I>
                            </CornerIcons>
                          </Corner>
                          <DateHead colSpan={13}>03/23/20</DateHead>
                        </tr>
                        <tr>
                          {hours.map((h) => (
                            <HourHead key={h}>
                              <HourLine>
                                {alarmHours.includes(h) ? <AlarmIcon /> : <BookIcon />}
                                <span>{h}:00 -<br />{h}:59 PDT</span>
                              </HourLine>
                            </HourHead>
                          ))}
                        </tr>
                      </thead>
                      <tbody>
                        {rows.map(([t, kind = '', unit]) => (
                          <tr key={t}>
                            <LabelCell $kind={kind} scope="row">
                              <LabelLine>
                                <span />
                                <Marker>{kind === 'mark' ? <Diamond /> : kind ? <Tri c={kind === 'on' ? '#062a5c' : '#111'} /> : null}</Marker>
                                <span>{t}</span>
                                <Unit>{unit}</Unit>
                              </LabelLine>
                            </LabelCell>
                            {hours.map((h, i) => <Cell key={h} $kind={kind} $first={i === 0} $focus={kind === 'on' && i === 0} />)}
                          </tr>
                        ))}
                      </tbody>
                    </Sheet>
                  </GridClip>
                  <VScroll>
                    <ScrollButton aria-label="Scroll up"><Chevron d="M1 6l3-3.500L7 6" /></ScrollButton>
                    <VThumb />
                    <ScrollButton aria-label="Scroll down"><Chevron d="M1 2l3 3.500L7 2" /></ScrollButton>
                  </VScroll>
                  <HScroll>
                    <ScrollButton aria-label="Scroll left"><Chevron d="M6 1L2.500 4 6 7" /></ScrollButton>
                    <HThumb />
                    <ScrollButton aria-label="Scroll right"><Chevron d="M2 1l3.500 3L2 7" /></ScrollButton>
                  </HScroll>
                  <ScrollCorner />
                </GridArea>
              </Flow>
            </Work>
          </Main>
        </Body>

        <StatusBar>
          <StatusCell $w={423} />
          <StatusCell>TRAINB</StatusCell>
          <StatusCell>ORRN001</StatusCell>
          <StatusCell>March 23, 2020</StatusCell>
          <StatusCell>14:31 PDT</StatusCell>
        </StatusBar>
        <TaskBar>
          {taskIcons.map(([name, icon], i) => <TaskButton key={name} $on={i === 13} aria-label={name}>{icon}</TaskButton>)}
          <Tray>
            <IconButton $w={24} aria-label="Hidden icons"><I w={12} h={8}><path d="M.8 7L6 1.500 11.200 7" stroke="#fff" strokeWidth="1.500" /></I></IconButton>
            <IconButton $w={25} aria-label="Battery"><I w={17} h={12}><rect x="5.500" y="3.500" width="10" height="7" stroke="#fff" /><rect x="7" y="5" width="7" height="4" fill="#fff" /><path d="M16.500 5.500v3M1 3h5v2a2 2 0 0 1-5 0zM2.500 3V0M4.500 3V0M3.500 7v4H6" stroke="#fff" /></I></IconButton>
            <IconButton $w={25} aria-label="Network"><I w={14} h={14}><path d="M1 13C1 6 6 1 13 1M4 13c0-5 4-9 9-9M7 13c0-3 3-6 6-6M10 13c0-2 1-3 3-3" stroke="#ddd" strokeWidth="1.300" /><circle cx="12.500" cy="12.500" r="1.300" fill="#fff" /></I></IconButton>
            <IconButton $w={22} aria-label="Volume"><I w={16} h={14}><path d="M.7 5h2.500L7 1.500v11L3.200 9H.7z" stroke="#fff" /><path d="M9 5q1.500 2 0 4M11 3q3 4 0 8M13 1.500q4.500 5.500 0 11" stroke="#ddd" /></I></IconButton>
            <Clock>2:31 PM</Clock>
            <IconButton $w={44} aria-label="Notifications"><I w={17} h={17}><path d="M.7 1h15.600v11.500H11L8.500 15 6 12.500H.7z" stroke="#fff" strokeWidth="1.300" /></I></IconButton>
            <IconButton $w={10} as="span" />
          </Tray>
        </TaskBar>
      </Frame>
      <Pointer><I w={14} h={21}><path d="M1 1v15l3.500-3.200L7 19l2.500-1-2.500-6H12z" fill="#fff" stroke="#111" /></I></Pointer>
    </Screen>
  );
}
